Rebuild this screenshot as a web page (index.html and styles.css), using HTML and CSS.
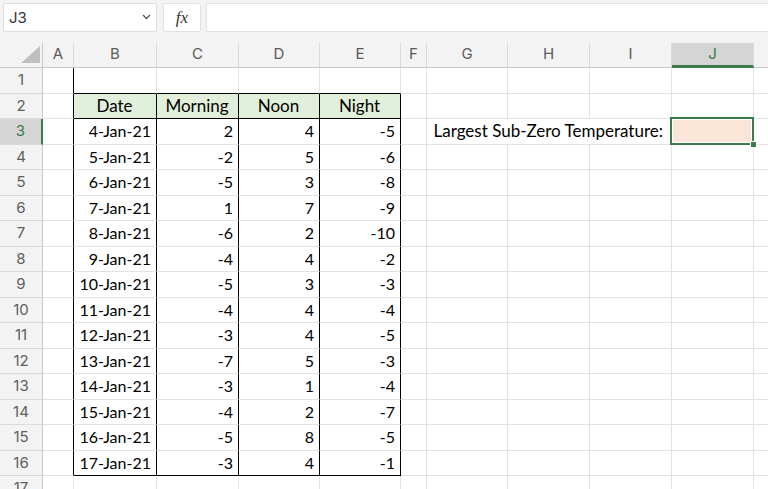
FILE: index.html
```html
<!DOCTYPE html>
<html>
<head>
<meta charset="utf-8">
<link rel="stylesheet" href="styles.css">
</head>
<body>
<div class="toolbar">
  <div class="namebox">
    <span class="ref">J3</span>
    <svg class="chev" width="9" height="6" viewBox="0 0 9 6"><polyline points="1,1 4.5,4.5 8,1" fill="none" stroke="#555" stroke-width="1.3"/></svg>
  </div>
  <div class="fxbox"><span class="fx">fx</span></div>
  <div class="formula"></div>
</div>
<table class="sheet">
  <colgroup>
    <col class="c-rh"><col class="c-a"><col class="c-b"><col class="c-c"><col class="c-d"><col class="c-e"><col class="c-f"><col class="c-g"><col class="c-h"><col class="c-i"><col class="c-j"><col class="c-k">
  </colgroup>
  <thead>
    <tr class="colhead">
      <th class="corner"><span class="tri"></span></th>
      <th>A</th><th>B</th><th>C</th><th>D</th><th>E</th><th>F</th><th>G</th><th>H</th><th>I</th><th class="active">J</th><th></th>
    </tr>
  </thead>
  <tbody>
    <tr><th>1</th><td class="rb"></td><td class="bb"></td><td class="bb"></td><td class="bb"></td><td class="bb"></td><td></td><td></td><td></td><td></td><td></td><td></td></tr>
    <tr><th>2</th><td class="rb"></td><td class="hd rb bb">Date</td><td class="hd rb bb">Morning</td><td class="hd rb bb">Noon</td><td class="hd rb bb">Night</td><td></td><td></td><td></td><td></td><td></td><td></td></tr>
    <tr><th class="active">3</th><td class="rb"></td><td class="n rb">4-Jan-21</td><td class="n rb">2</td><td class="n rb">4</td><td class="n rb">-5</td><td></td><td class="label" colspan="3">Largest Sub-Zero Temperature:</td><td class="sel"></td><td></td></tr>
    <tr><th>4</th><td class="rb"></td><td class="n rb">5-Jan-21</td><td class="n rb">-2</td><td class="n rb">5</td><td class="n rb">-6</td><td></td><td></td><td></td><td></td><td></td><td></td></tr>
    <tr><th>5</th><td class="rb"></td><td class="n rb">6-Jan-21</td><td class="n rb">-5</td><td class="n rb">3</td><td class="n rb">-8</td><td></td><td></td><td></td><td></td><td></td><td></td></tr>
    <tr><th>6</th><td class="rb"></td><td class="n rb">7-Jan-21</td><td class="n rb">1</td><td class="n rb">7</td><td class="n rb">-9</td><td></td><td></td><td></td><td></td><td></td><td></td></tr>
    <tr><th>7</th><td class="rb"></td><td class="n rb">8-Jan-21</td><td class="n rb">-6</td><td class="n rb">2</td><td class="n rb">-10</td><td></td><td></td><td></td><td></td><td></td><td></td></tr>
    <tr><th>8</th><td class="rb"></td><td class="n rb">9-Jan-21</td><td class="n rb">-4</td><td class="n rb">4</td><td class="n rb">-2</td><td></td><td></td><td></td><td></td><td></td><td></td></tr>
    <tr><th>9</th><td class="rb"></td><td class="n rb">10-Jan-21</td><td class="n rb">-5</td><td class="n rb">3</td><td class="n rb">-3</td><td></td><td></td><td></td><td></td><td></td><td></td></tr>
    <tr><th>10</th><td class="rb"></td><td class="n rb">11-Jan-21</td><td class="n rb">-4</td><td class="n rb">4</td><td class="n rb">-4</td><td></td><td></td><td></td><td></td><td></td><td></td></tr>
    <tr><th>11</th><td class="rb"></td><td class="n rb">12-Jan-21</td><td class="n rb">-3</td><td class="n rb">4</td><td class="n rb">-5</td><td></td><td></td><td></td><td></td><td></td><td></td></tr>
    <tr><th>12</th><td class="rb"></td><td class="n rb">13-Jan-21</td><td class="n rb">-7</td><td class="n rb">5</td><td class="n rb">-3</td><td></td><td></td><td></td><td></td><td></td><td></td></tr>
    <tr><th>13</th><td class="rb"></td><td class="n rb">14-Jan-21</td><td class="n rb">-3</td><td class="n rb">1</td><td class="n rb">-4</td><td></td><td></td><td></td><td></td><td></td><td></td></tr>
    <tr><th>14</th><td class="rb"></td><td class="n rb">15-Jan-21</td><td class="n rb">-4</td><td class="n rb">2</td><td class="n rb">-7</td><td></td><td></td><td></td><td></td><td></td><td></td></tr>
    <tr><th>15</th><td class="rb"></td><td class="n rb">16-Jan-21</td><td class="n rb">-5</td><td class="n rb">8</td><td class="n rb">-5</td><td></td><td></td><td></td><td></td><td></td><td></td></tr>
    <tr><th>16</th><td class="rb"></td><td class="n rb bb">17-Jan-21</td><td class="n rb bb">-3</td><td class="n rb bb">4</td><td class="n rb bb">-1</td><td></td><td></td><td></td><td></td><td></td><td></td></tr>
    <tr><th>17</th><td></td><td></td><td></td><td></td><td></td><td></td><td></td><td></td><td></td><td></td><td></td></tr>
  </tbody>
</table>
</body>
</html>
```

FILE: styles.css
```css
html, body {
  margin: 0;
  padding: 0;
  background: #ffffff;
  overflow: hidden;
}
body {
  width: 768px;
  height: 489px;
  font-family: "Lato", "Open Sans", sans-serif;
}

/* ---------- toolbar ---------- */
.toolbar {
  height: 43px;
  box-sizing: border-box;
  background: #f3f3f3;
  display: flex;
  align-items: flex-start;
  padding: 3px 0 0 3px;
}
.namebox {
  width: 154px;
  height: 29px;
  box-sizing: border-box;
  background: #fff;
  border: 1px solid #dedede;
  border-radius: 2px;
  display: flex;
  align-items: center;
  justify-content: space-between;
  padding: 0 5px 0 5px;
  margin-right: 6px;
}
.ref {
  font-family: "Inter", "Liberation Sans", sans-serif;
  font-size: 15px;
  color: #333;
}
.chev { margin-top: -2px; }
.fxbox {
  width: 38px;
  height: 29px;
  box-sizing: border-box;
  background: #fff;
  border: 1px solid #e2e2e2;
  border-radius: 2px;
  display: flex;
  align-items: center;
  justify-content: center;
  margin-right: 5px;
}
.fx {
  font-family: "Liberation Serif", serif;
  font-style: italic;
  font-size: 17px;
  color: #333;
}
.formula {
  flex: 1;
  height: 29px;
  box-sizing: border-box;
  background: #fff;
  border: 1px solid #e2e2e2;
  border-right: none;
}

/* ---------- sheet ---------- */
.sheet {
  table-layout: fixed;
  border-collapse: separate;
  border-spacing: 0;
  width: 834px;
}
.c-rh { width: 43px; }
.c-a { width: 31px; }
.c-b { width: 83px; }
.c-c { width: 82px; }
.c-d { width: 81px; }
.c-e { width: 81px; }
.c-f { width: 26px; }
.c-g { width: 81px; }
.c-h { width: 82px; }
.c-i { width: 82px; }
.c-j { width: 82px; }
.c-k { width: 80px; }

.colhead th {
  height: 25px;
  box-sizing: border-box;
  background: #f3f3f3;
  border-right: 1px solid #dadada;
  border-bottom: 1px solid #c9c9c9;
  font-family: "Inter", "Liberation Sans", sans-serif;
  font-weight: 400;
  font-size: 15px;
  color: #5a5a5a;
  text-align: center;
  vertical-align: middle;
  padding: 0 0 3px 0;
  line-height: 18px;
}
.colhead th.corner {
  position: relative;
  border-right: 1px solid #c9c9c9;
}
.tri {
  position: absolute;
  right: 2px;
  bottom: 4px;
  width: 0;
  height: 0;
  border-left: 19px solid transparent;
  border-bottom: 17px solid #bfbfbf;
}
.colhead th.active {
  background: #d5d5d5;
  color: #3c7a48;
  border-bottom: 3px solid #3d7b4a;
  padding-bottom: 1px;
}

tbody tr { height: 25.5px; }
tbody th {
  box-sizing: border-box;
  background: #f3f3f3;
  border-right: 1px solid #c9c9c9;
  border-bottom: 1px solid #dadada;
  font-family: "Inter", "Liberation Sans", sans-serif;
  font-weight: 400;
  font-size: 15px;
  color: #5e5e5e;
  text-align: center;
  vertical-align: middle;
  padding: 0;
  line-height: 18px;
}
tbody th.active {
  background: #d5d5d5;
  color: #3c7a48;
  border-right: 2px solid #3d7b4a;
}
td {
  box-sizing: border-box;
  border-right: 1px solid #e2e2e2;
  border-bottom: 1px solid #e2e2e2;
  padding: 0 5px 0 4px;
  font-size: 16px;
  line-height: 22px;
  color: #000;
  vertical-align: middle;
  white-space: nowrap;
  overflow: visible;
}
td.rb { border-right-color: #000; }
td.bb { border-bottom-color: #000; }
td.hd {
  background: #e2efda;
  text-align: center;
  font-size: 17px;
}
td.n { text-align: right; }
td.label {
  text-align: right;
  padding-right: 8px;
  font-size: 17px;
}
td.sel {
  position: relative;
  background: #fbe5d6;
}
td.sel::after {
  content: "";
  position: absolute;
  left: -2px;
  top: -2px;
  right: -1px;
  bottom: -1px;
  border: 2px solid #3d7b4a;
  box-shadow: inset 0 0 0 1px #fff;
}
td.sel::before {
  content: "";
  position: absolute;
  right: -4px;
  bottom: -4px;
  width: 5px;
  height: 5px;
  background: #3d7b4a;
  border: 1px solid #fff;
  z-index: 2;
}
```
